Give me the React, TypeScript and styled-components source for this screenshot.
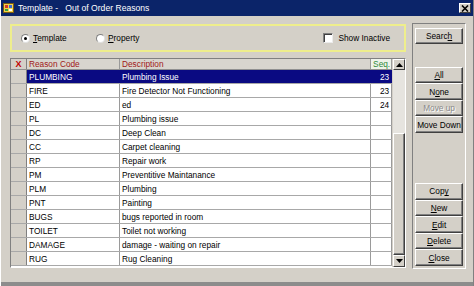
import React from "react";
import styled, { createGlobalStyle, css } from "styled-components";

const GlobalStyle = createGlobalStyle`
  html, body {
    margin: 0;
    padding: 0;
    width: 474px;
    height: 286px;
    overflow: hidden;
    background: #d4d0c8;
  }
  body {
    font-family: "Liberation Sans", Arial, sans-serif;
    font-size: 8.3px;
    color: #000;
  }
  * { box-sizing: border-box; }
`;

const Window = styled.div`
  width: 474px;
  height: 286px;
  display: flex;
  flex-direction: column;
  background: #d4d0c8;
  border-left: 1px solid #ffffff;
  border-right: 1px solid #808080;
`;

const TitleBar = styled.div`
  height: 16px;
  flex: 0 0 16px;
  background: #0b2469;
  display: flex;
  align-items: center;
  padding: 0 2px 0 2px;
  gap: 3px;
  color: #fff;
  font-size: 8.6px;
  white-space: pre;
`;

const TitleText = styled.span`
  flex: 1;
`;

const CloseBox = styled.div`
  width: 12px;
  height: 10px;
  background: #d4d0c8;
  border-top: 1px solid #fff;
  border-left: 1px solid #fff;
  border-right: 1px solid #404040;
  border-bottom: 1px solid #404040;
  display: flex;
  align-items: center;
  justify-content: center;
`;

const Body = styled.div`
  flex: 1;
  display: flex;
  gap: 6px;
  padding: 8px 7px 0 9px;
`;

const LeftCol = styled.div`
  width: 397px;
  display: flex;
  flex-direction: column;
  gap: 6px;
`;

const GroupBox = styled.div`
  height: 28px;
  border: 2px solid #eeee8c;
  display: flex;
  align-items: center;
  padding: 0 14px 0 9px;
`;

const Choice = styled.label<{ $width?: number }>`
  display: flex;
  align-items: center;
  gap: 3px;
  width: ${(p) => (p.$width ? `${p.$width}px` : "auto")};
`;

const Spacer = styled.div`
  flex: 1;
`;

const RadioMark = styled.span<{ $on?: boolean }>`
  width: 9px;
  height: 9px;
  border-radius: 50%;
  background: #fff;
  border: 1px solid #808080;
  border-right-color: #e0e0e0;
  border-bottom-color: #e0e0e0;
  display: inline-flex;
  align-items: center;
  justify-content: center;
  &::after {
    content: "";
    width: 3px;
    height: 3px;
    border-radius: 50%;
    background: ${(p) => (p.$on ? "#000" : "transparent")};
  }
`;

const CheckMark = styled.span`
  width: 10px;
  height: 10px;
  background: #fff;
  border-top: 1px solid #808080;
  border-left: 1px solid #808080;
  border-right: 1px solid #ececec;
  border-bottom: 1px solid #ececec;
  box-shadow: inset 1px 1px 0 #404040;
  margin-right: 2px;
`;

const Grid = styled.div`
  height: 210px;
  display: flex;
  border: 1px solid #808080;
  border-right-color: #fff;
  border-bottom-color: #fff;
  background: #fff;
`;

const Table = styled.div`
  flex: 1;
  display: flex;
  flex-direction: column;
`;

const Row = styled.div<{ $head?: boolean; $selected?: boolean }>`
  display: flex;
  height: ${(p) => (p.$head ? 11 : 14)}px;
  flex: 0 0 ${(p) => (p.$head ? 11 : 14)}px;
  border-bottom: 1px solid #a8a8a8;
  ${(p) =>
    p.$head &&
    css`
      background: #d8d5ce;
      border-bottom-color: #909090;
    `}
`;

const Cell = styled.div<{
  $w?: number;
  $right?: boolean;
  $color?: string;
  $selected?: boolean;
  $stub?: boolean;
}>`
  ${(p) => (p.$w ? `width: ${p.$w}px; flex: 0 0 ${p.$w}px;` : "flex: 1;")}
  display: flex;
  align-items: center;
  justify-content: ${(p) => (p.$right ? "flex-end" : "flex-start")};
  padding: 0 2px 0 2px;
  border-right: 1px solid #9a9a9a;
  white-space: nowrap;
  overflow: hidden;
  color: ${(p) => p.$color || "#000"};
  ${(p) =>
    p.$selected &&
    css`
      background: #0a0a82;
      color: #fff;
      border-right-color: #0a0a82;
    `}
  ${(p) =>
    p.$stub &&
    css`
      background: #d4d0c8;
      justify-content: center;
      border-right-color: #808080;
    `}
`;

const RedX = styled.span`
  color: #c00000;
  font-weight: bold;
  font-size: 9px;
`;

const ScrollBar = styled.div`
  width: 13px;
  flex: 0 0 13px;
  display: flex;
  flex-direction: column;
  background: #d4d0c8;
  border-left: 1px solid #d4d0c8;
`;

const Arrow = styled.div<{ $h: number }>`
  height: ${(p) => p.$h}px;
  flex: 0 0 ${(p) => p.$h}px;
  background: #d4d0c8;
  border-top: 1px solid #fff;
  border-left: 1px solid #fff;
  border-right: 1px solid #404040;
  border-bottom: 1px solid #404040;
  display: flex;
  align-items: center;
  justify-content: center;
`;

const Track = styled.div<{ $h: number }>`
  height: ${(p) => p.$h}px;
  flex: 0 0 ${(p) => p.$h}px;
  background: #e6e4df;
`;

const Thumb = styled.div`
  flex: 1;
  background: #d4d0c8;
  border-top: 1px solid #fff;
  border-left: 1px solid #fff;
  border-right: 1px solid #404040;
  border-bottom: 1px solid #404040;
  box-shadow: inset -1px -1px 0 #808080;
`;

const SideFrame = styled.div`
  width: 54px;
  height: 246px;
  margin-top: -1px;
  display: flex;
  flex-direction: column;
  padding: 4px 2px 2px 2px;
  border-top: 1px solid #808080;
  border-left: 1px solid #808080;
  border-right: 1px solid #fff;
  border-bottom: 1px solid #fff;
`;

const ButtonGroup = styled.div<{ $top: number }>`
  display: flex;
  flex-direction: column;
  margin-top: ${(p) => p.$top}px;
`;

const Btn = styled.div<{ $h?: number; $disabled?: boolean }>`
  height: ${(p) => p.$h || 16.6}px;
  display: flex;
  align-items: center;
  justify-content: center;
  background: #d4d0c8;
  border-top: 1px solid #fff;
  border-left: 1px solid #fff;
  border-right: 1px solid #404040;
  border-bottom: 1px solid #404040;
  box-shadow: inset -1px -1px 0 #808080;
  font-size: 8.3px;
  color: ${(p) => (p.$disabled ? "#8a8a8a" : "#000")};
  ${(p) => p.$disabled && "text-shadow: 1px 1px 0 #fff;"}
`;

const BottomEdge = styled.div`
  height: 4px;
  flex: 0 0 4px;
  background: #8c8c8c;
  margin-top: auto;
`;

type Reason = { code: string; desc: string; seq?: string };

const reasons: Reason[] = [
  { code: "PLUMBING", desc: "Plumbing Issue", seq: "23" },
  { code: "FIRE", desc: "Fire Detector Not Functioning", seq: "23" },
  { code: "ED", desc: "ed", seq: "24" },
  { code: "PL", desc: "Plumbing issue" },
  { code: "DC", desc: "Deep Clean" },
  { code: "CC", desc: "Carpet cleaning" },
  { code: "RP", desc: "Repair work" },
  { code: "PM", desc: "Preventitive Maintanance" },
  { code: "PLM", desc: "Plumbing" },
  { code: "PNT", desc: "Painting" },
  { code: "BUGS", desc: "bugs reported in room" },
  { code: "TOILET", desc: "Toilet not working" },
  { code: "DAMAGE", desc: "damage - waiting on repair" },
  { code: "RUG", desc: "Rug Cleaning" },
];

const TitleIcon = () => (
  <svg width="12" height="12" viewBox="0 0 12 12">
    <rect x="0.5" y="1.5" width="10" height="9" fill="#f4d24a" stroke="#7a5a10" />
    <rect x="2" y="3" width="3" height="3" fill="#d43a2a" />
    <rect x="6" y="3" width="3" height="3" fill="#3a6ad4" />
    <rect x="2" y="7" width="3" height="2" fill="#3aa040" />
    <rect x="6" y="7" width="3" height="2" fill="#ffffff" />
  </svg>
);

const App = () => {
  return (
    <>
      <GlobalStyle />
      <Window>
        <TitleBar>
          <TitleIcon />
          <TitleText>{"Template -   Out of Order Reasons"}</TitleText>
          <CloseBox>
            <svg width="8" height="7" viewBox="0 0 8 7">
              <path d="M1 0.5 L7 6.5 M7 0.5 L1 6.5" stroke="#000" strokeWidth="1.6" />
            </svg>
          </CloseBox>
        </TitleBar>
        <Body>
          <LeftCol>
            <GroupBox>
              <Choice $width={75}>
                <RadioMark $on />
                <span>
                  <u>T</u>emplate
                </span>
              </Choice>
              <Choice>
                <RadioMark />
                <span>
                  <u>P</u>roperty
                </span>
              </Choice>
              <Spacer />
              <Choice>
                <CheckMark />
                <span>Show Inactive</span>
              </Choice>
            </GroupBox>
            <Grid>
              <Table>
                <Row $head>
                  <Cell $w={16} $stub>
                    <RedX>X</RedX>
                  </Cell>
                  <Cell $w={93} $color="#a01818">
                    Reason Code
                  </Cell>
                  <Cell $color="#a01818">Description</Cell>
                  <Cell $w={21} $color="#2e8a3a" style={{ background: "#eef3ea" }}>
                    Seq.
                  </Cell>
                </Row>
                {reasons.map((r, i) => (
                  <Row key={r.code}>
                    <Cell $w={16} $stub />
                    <Cell $w={93} $selected={i === 0}>
                      {r.code}
                    </Cell>
                    <Cell $selected={i === 0}>{r.desc}</Cell>
                    <Cell $w={21} $right $selected={i === 0}>
                      {r.seq}
                    </Cell>
                  </Row>
                ))}
              </Table>
              <ScrollBar>
                <Arrow $h={11}>
                  <svg width="7" height="4" viewBox="0 0 7 4">
                    <path d="M3.5 0 L7 4 L0 4 Z" fill="#000" />
                  </svg>
                </Arrow>
                <Track $h={63} />
                <Thumb />
                <Arrow $h={12}>
                  <svg width="7" height="4" viewBox="0 0 7 4">
                    <path d="M0 0 L7 0 L3.5 4 Z" fill="#000" />
                  </svg>
                </Arrow>
              </ScrollBar>
            </Grid>
          </LeftCol>
          <SideFrame>
            <Btn $h={17}>
              <span>
                Searc<u>h</u>
              </span>
            </Btn>
            <ButtonGroup $top={23}>
              <Btn>
                <span>
                  <u>A</u>ll
                </span>
              </Btn>
              <Btn>
                <span>
                  N<u>o</u>ne
                </span>
              </Btn>
              <Btn $disabled>Move up</Btn>
              <Btn>Move Down</Btn>
            </ButtonGroup>
            <ButtonGroup $top={50}>
              <Btn>
                <span>
                  Cop<u>y</u>
                </span>
              </Btn>
              <Btn>
                <span>
                  <u>N</u>ew
                </span>
              </Btn>
              <Btn>
                <span>
                  <u>E</u>dit
                </span>
              </Btn>
              <Btn>
                <span>
                  <u>D</u>elete
                </span>
              </Btn>
              <Btn>
                <span>
                  <u>C</u>lose
                </span>
              </Btn>
            </ButtonGroup>
          </SideFrame>
        </Body>
        <BottomEdge />
      </Window>
    </>
  );
};

export default App;
